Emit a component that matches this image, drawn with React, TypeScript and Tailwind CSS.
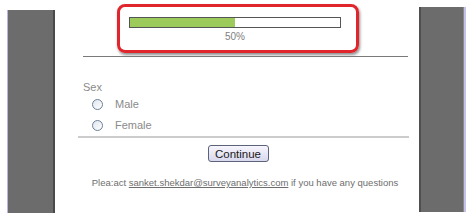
import React from 'react'

const font = { fontFamily: '"Liberation Sans", Arial, sans-serif' }

const Radio = ({ label }: { label: string }) => (
	<div className="flex items-center h-[21px]">
		<span className="ml-[9px] w-[11px] h-[11px] rounded-full border border-[#6b7f99] bg-gradient-to-br from-[#dfe6ef] to-white" />
		<span className="ml-[12px] text-[11px] text-[#8a8a8a]">{label}</span>
	</div>
)

const SidePanel = ({ side }: { side: 'left' | 'right' }) => (
	<div
		className={
			side === 'left'
				? 'ml-[7px] mt-[10px] h-[203px] w-[48px] flex'
				: 'mt-[7px] h-[205px] w-[47px] flex'
		}
	>
		{side === 'left' && <div className="w-[1px] bg-[#b9b6e6]" />}
		<div
			className={
				side === 'left'
					? 'flex-1 bg-[#6c6c6c] border-r-2 border-[#4a4a4a]'
					: 'flex-1 bg-[#6c6c6c] border-l-2 border-[#4f4f4f] border-r border-r-[#8a8a8a]'
			}
		/>
		{side === 'right' && <div className="w-[2px] bg-[#c4c1ea]" />}
	</div>
)

export default function App() {
	return (
		<div className="w-[474px] h-[219px] bg-white flex overflow-hidden" style={font}>
			<SidePanel side="left" />
			<div className="w-[364px] flex flex-col">
				<div className="ml-[62px] mt-[4px] w-[242px] h-[49px] rounded-[8px] border-[3px] border-[#e0262c] shadow-[1px_2px_3px_rgba(0,0,0,0.45)] flex flex-col">
					<div className="ml-[9px] mt-[10px] w-[212px] flex flex-col items-center">
						<div className="w-full h-[11px] border border-[#555] bg-white">
							<div className="h-full w-1/2 bg-[#9ccb5b]" />
						</div>
						<div className="mt-[3px] text-[10px] leading-[12px] text-[#808080]">50%</div>
					</div>
				</div>
				<div className="ml-[28px] mt-[3px] w-[325px] h-[1px] bg-[#7a7a7a]" />
				<div className="ml-[28px] mt-[24px] text-[11px] leading-[13px] text-[#8a8a8a]">Sex</div>
				<div className="ml-[28px] mt-[0px]">
					<Radio label="Male" />
					<Radio label="Female" />
				</div>
				<div className="ml-[23px] mt-[0px] w-[331px] h-[2px] bg-[#cccccc]" />
				<div className="mt-[7px] flex justify-center">
					<button className="ml-[2px] w-[61px] h-[17px] rounded-[3px] border border-[#5a6378] bg-gradient-to-b from-[#f7f6fd] to-[#d9d8ee] text-[11.5px] leading-[14px] text-[#1a1a1a]">
						Continue
					</button>
				</div>
				<div className="mt-[15px] ml-[16px] text-center text-[9.5px] leading-[12px] text-[#6e6e6e]">
					Plea:act <span className="underline">sanket.shekdar@surveyanalytics.com</span> if you have any questions
				</div>
			</div>
			<SidePanel side="right" />
		</div>
	)
}
